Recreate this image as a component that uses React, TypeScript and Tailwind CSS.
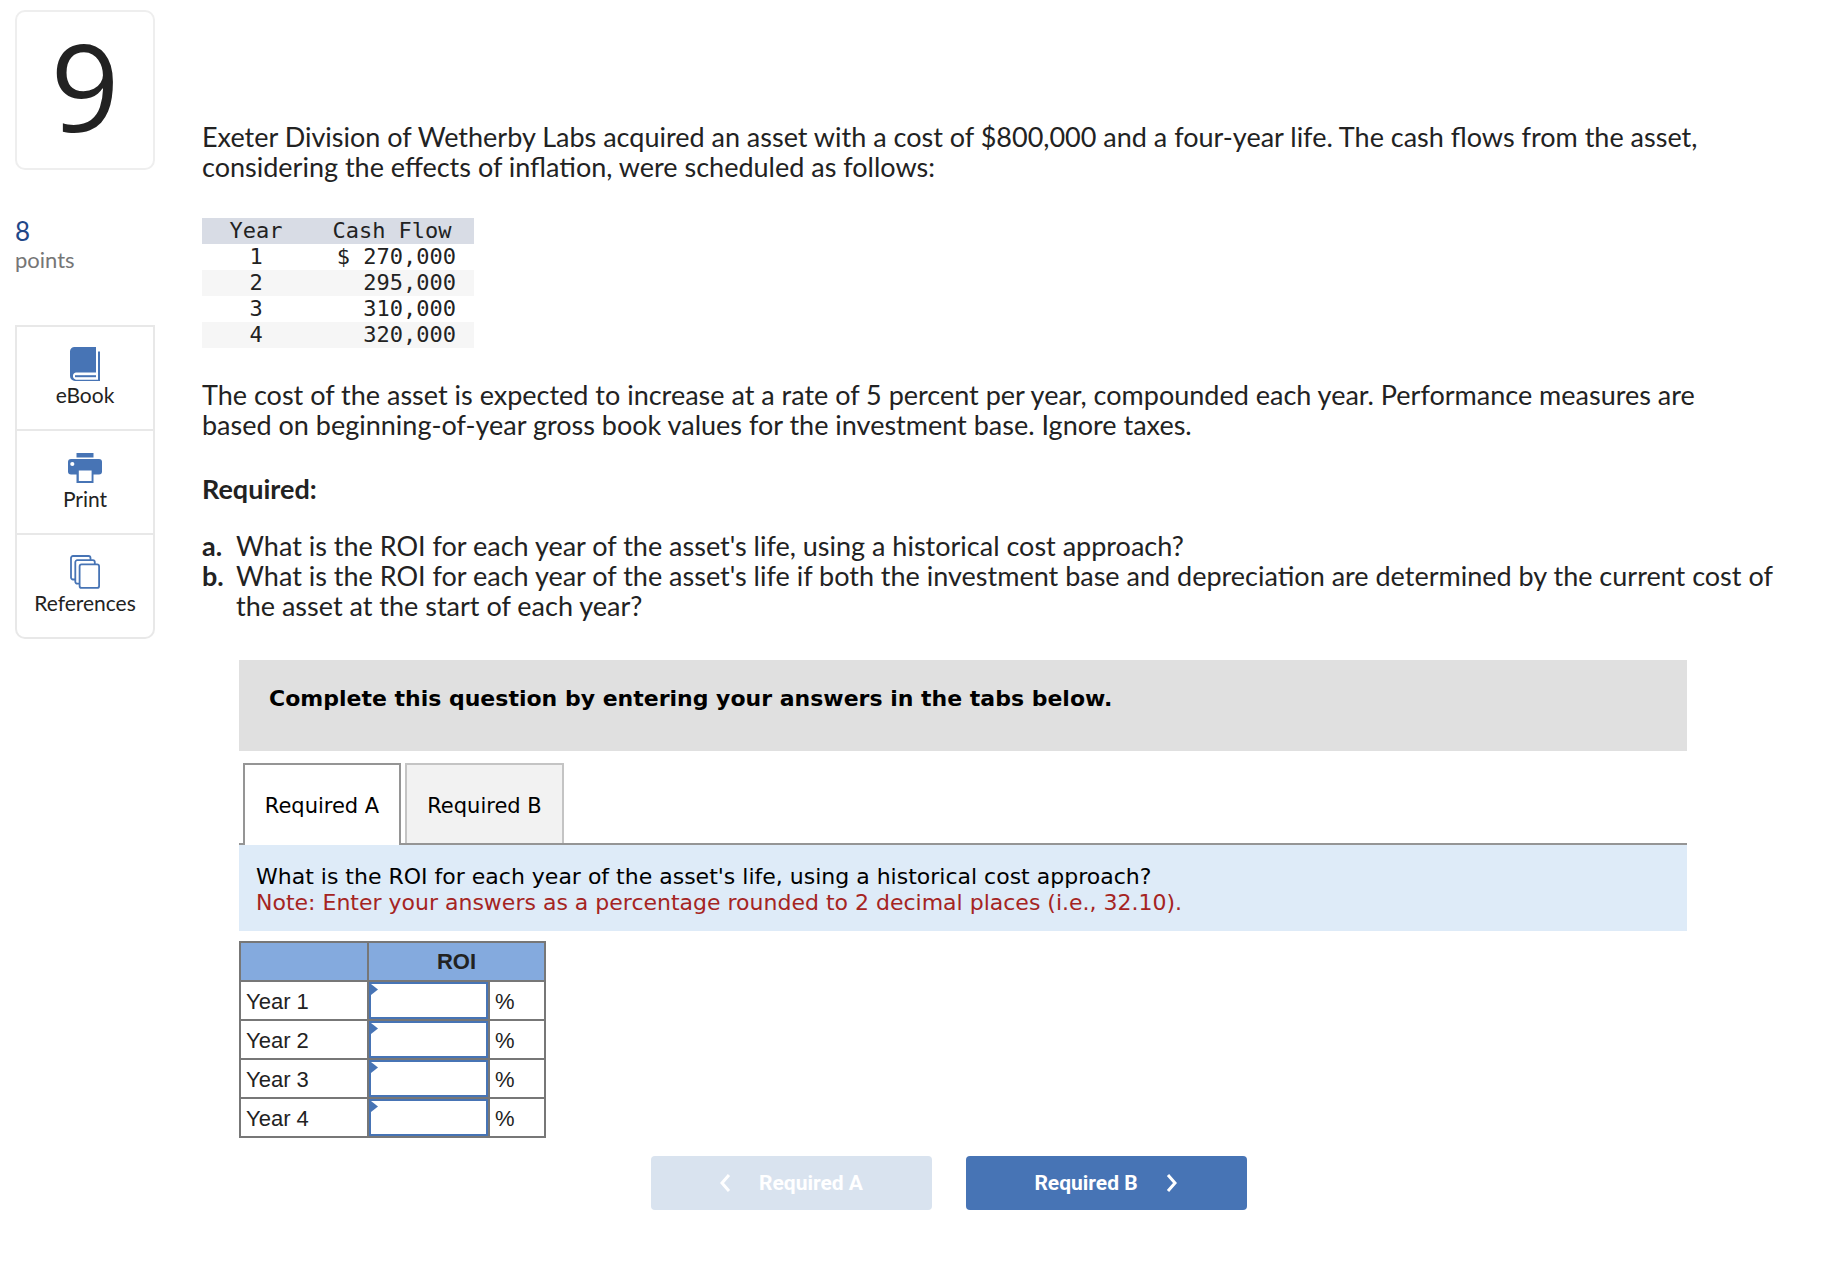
import React, { ReactNode, useState } from "react";

const cashFlows = [
    { year: 1, amount: "$ 270,000" },
    { year: 2, amount: "295,000" },
    { year: 3, amount: "310,000" },
    { year: 4, amount: "320,000" },
];

function BookIcon() {
    return (
        <svg width="30" height="34" viewBox="0 0 30 34" aria-hidden="true">
            <path
                fill="#4774b5"
                d="M4.500 0H26v25.500H5.800a3.700 3.700 0 0 0 0 7.200H28V4.500h2V34H5a5 5 0 0 1-5-5V4.500A4.500 4.500 0 0 1 4.500 0z"
            />
            <path d="M5 29.200H26" stroke="#4774b5" strokeWidth="2" />
        </svg>
    );
}

function PrinterIcon() {
    return (
        <svg width="34" height="30" viewBox="0 0 34 30" aria-hidden="true">
            <path fill="#4774b5" d="M8.500 0h17v4.500h-17z" />
            <rect y="6" width="34" height="15.500" rx="3" fill="#4774b5" />
            <circle cx="4.300" cy="11" r="2.100" fill="#fff" />
            <path fill="#4774b5" d="M8.500 16h17v14h-17z" />
            <path fill="#fff" d="M10.800 17.500h12.800v10.500h-12.800z" />
        </svg>
    );
}

function PagesIcon() {
    return (
        <svg
            width="30"
            height="34"
            viewBox="0 0 30 34"
            fill="#fff"
            stroke="#4774b5"
            strokeWidth="1.800"
            aria-hidden="true"
        >
            <rect x="1" y="1" width="19.500" height="23.500" rx="2" />
            <rect x="5.300" y="5.200" width="19.500" height="23.500" rx="2" />
            <rect x="9.600" y="9.400" width="19.500" height="23.500" rx="2" />
        </svg>
    );
}

interface ToolLinkProps {
    label: string;
    children: ReactNode;
}

function ToolLink({ label, children }: ToolLinkProps) {
    return (
        <a
            href="#"
            className="flex h-[104px] flex-col items-center border-t-2 border-[#e8e8e8] pt-5 text-[21px] leading-6"
        >
            <span className="flex h-9 items-center pb-[2px]">{children}</span>
            {label}
        </a>
    );
}

function Sidebar() {
    return (
        <aside className="w-[140px] shrink-0">
            <div className="flex h-40 items-center justify-center rounded-[10px] border-2 border-[#eeeeee] pb-2 font-['Open_Sans',sans-serif] text-[120px] leading-none">
                9
            </div>
            <div className="mt-[47px] text-[26px] leading-7 text-[#1f4788]">8</div>
            <div className="text-[22px] leading-[30px] text-[#767676]">points</div>
            <nav className="mt-[50px] rounded-b-[10px] border-x-2 border-b-2 border-[#e8e8e8]">
                <ToolLink label="eBook">
                    <BookIcon />
                </ToolLink>
                <ToolLink label="Print">
                    <PrinterIcon />
                </ToolLink>
                <ToolLink label="References">
                    <PagesIcon />
                </ToolLink>
            </nav>
        </aside>
    );
}

function CashFlowTable() {
    return (
        <table className="mt-9 font-['DejaVu_Sans_Mono',monospace] text-[22px] leading-[26px]">
            <thead>
                <tr className="bg-[#d8dce5]">
                    <th className="w-[108px] p-0 font-normal">Year</th>
                    <th className="w-[164px] p-0 font-normal">Cash Flow</th>
                </tr>
            </thead>
            <tbody>
                {cashFlows.map((row) => (
                    <tr key={row.year} className="even:bg-[#f6f6f6]">
                        <td className="p-0 text-center">{row.year}</td>
                        <td className="p-0 pr-[18px] text-right">{row.amount}</td>
                    </tr>
                ))}
            </tbody>
        </table>
    );
}

function RoiTable() {
    const [values, setValues] = useState(["", "", "", ""]);

    return (
        <table className="mt-[10px] border-collapse border-2 border-[#777777] font-['Liberation_Sans',sans-serif] text-[22px] leading-[25px] text-[#222222]">
            <thead>
                <tr className="h-[39px] bg-[#84aade]">
                    <td className="w-[128px] border-2 border-[#777777] p-0"></td>
                    <th colSpan={2} className="border-2 border-[#777777] p-0 font-bold">
                        ROI
                    </th>
                </tr>
            </thead>
            <tbody>
                {values.map((value, i) => (
                    <tr key={i} className="h-[39px]">
                        <td className="border-2 border-[#777777] p-0 pt-[2px] pl-[5px]">
                            <label htmlFor={`roi-${i}`}>Year {i + 1}</label>
                        </td>
                        <td className="relative w-[121px] border-2 border-[#777777] p-0">
                            <input
                                id={`roi-${i}`}
                                value={value}
                                onChange={(e) =>
                                    setValues(values.map((v, j) => (j === i ? e.target.value : v)))
                                }
                                className="block h-[37px] w-full border-2 border-[#4774b5] px-2 text-right outline-none"
                            />
                            <svg
                                className="absolute top-[2px] left-[2px]"
                                width="7"
                                height="11"
                                viewBox="0 0 7 11"
                                aria-hidden="true"
                            >
                                <path fill="#4774b5" d="M0 0l7 5.500-7 5.500z" />
                            </svg>
                        </td>
                        <td className="w-[56px] border-2 border-[#777777] p-0 pt-[2px] pl-[5px]">%</td>
                    </tr>
                ))}
            </tbody>
        </table>
    );
}

function Chevron({ d }: { d: string }) {
    return (
        <svg width="12" height="18" viewBox="0 0 12 18" aria-hidden="true">
            <path d={d} fill="none" stroke="#fff" strokeWidth="3" />
        </svg>
    );
}

function AnswerPanel() {
    return (
        <section className="mt-[39px] mr-[145px] ml-[37px] font-['DejaVu_Sans',sans-serif] text-black">
            <h2 className="h-[91px] bg-[#e0e0e0] px-[30px] pt-[25px] text-[22px] leading-7 font-bold">
                Complete this question by entering your answers in the tabs below.
            </h2>
            <div
                role="tablist"
                className="mt-3 flex gap-1 border-b-2 border-[#959595] px-1 text-[21px] leading-7"
            >
                <button
                    role="tab"
                    aria-selected="true"
                    className="-mb-[2px] h-[82px] w-[158px] border-2 border-b-0 border-[#959595] bg-white pt-[2px]"
                >
                    Required A
                </button>
                <button
                    role="tab"
                    aria-selected="false"
                    className="h-20 w-[159px] border-2 border-b-0 border-[#c4c4c4] bg-[#f2f2f2] pt-1"
                >
                    Required B
                </button>
            </div>
            <div className="bg-[#deebf8] px-[17px] pt-[19px] pb-[15px] text-[22px] leading-[26px]">
                <p>What is the ROI for each year of the asset's life, using a historical cost approach?</p>
                <p className="text-[#a52422]">
                    Note: Enter your answers as a percentage rounded to 2 decimal places (i.e., 32.10).
                </p>
            </div>
            <RoiTable />
            <div className="mt-[18px] flex justify-center gap-[34px] pr-[29px] font-['Roboto',sans-serif] text-[21px] font-bold text-white">
                <button
                    disabled
                    className="flex h-[54px] w-[281px] items-center justify-center gap-7 rounded bg-[#d9e3ef]"
                >
                    <Chevron d="M10 1L3 9l7 8" />
                    Required A
                </button>
                <button className="flex h-[54px] w-[281px] items-center justify-center gap-7 rounded bg-[#4774b5]">
                    Required B
                    <Chevron d="M2 1l7 8-7 8" />
                </button>
            </div>
        </section>
    );
}

export default function App() {
    return (
        <div className="flex min-h-screen gap-[47px] bg-white pt-[10px] pl-[15px] font-['Lato',sans-serif] text-[#222222]">
            <Sidebar />
            <main className="min-w-0 flex-1 pt-[112px] pb-[55px] text-[27px] leading-[30px]">
                <p className="pr-12">
                    Exeter Division of Wetherby Labs acquired an asset with a cost of $800,000 and a four-year
                    life. The cash flows from the asset, considering the effects of inflation, were scheduled as
                    follows:
                </p>
                <CashFlowTable />
                <p className="mt-8 pr-24">
                    The cost of the asset is expected to increase at a rate of 5 percent per year, compounded each
                    year. Performance measures are based on beginning-of-year gross book values for the investment
                    base. Ignore taxes.
                </p>
                <p className="mt-[34px] font-bold">Required:</p>
                <ol className="mt-[27px] pr-12">
                    <li className="flex">
                        <b className="w-[34px] shrink-0">a.</b>
                        What is the ROI for each year of the asset's life, using a historical cost approach?
                    </li>
                    <li className="flex">
                        <b className="w-[34px] shrink-0">b.</b>
                        What is the ROI for each year of the asset's life if both the investment base and
                        depreciation are determined by the current cost of the asset at the start of each year?
                    </li>
                </ol>
                <AnswerPanel />
            </main>
        </div>
    );
}
